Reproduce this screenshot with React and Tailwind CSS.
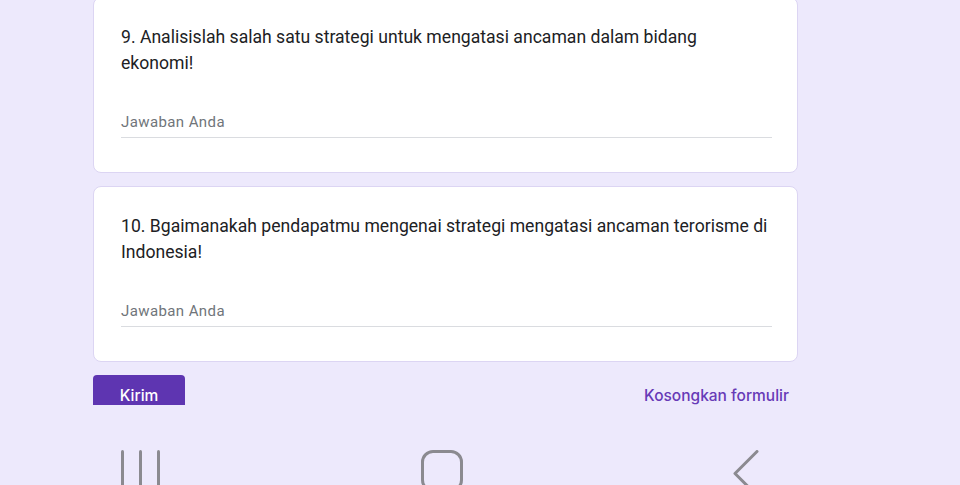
import React from 'react';

const questions = [
  { no: 9, text: 'Analisislah salah satu strategi untuk mengatasi ancaman dalam bidang ekonomi!' },
  { no: 10, text: 'Bgaimanakah pendapatmu mengenai strategi mengatasi ancaman terorisme di Indonesia!' },
];

const QuestionCard = ({ q }) => (
  <div className="w-[705px] bg-white border border-[#dcd5f3] rounded-lg pl-[27px] pr-[25px] pt-[26px] pb-[34px]">
    <div className="w-[650px] text-[17.6px] leading-[26px] text-[#202124]" style={{ fontFamily: 'Roboto, sans-serif' }}>
      {q.no}. {q.text}
    </div>
    <div className="mt-[36px] pb-[5px] border-b border-[#dadce0]">
      <div className="text-[15px] leading-[20px] tracking-[0.4px] text-[#70757a]" style={{ fontFamily: 'Roboto, sans-serif' }}>
        Jawaban Anda
      </div>
    </div>
  </div>
);

const NavBar = () => (
  <div className="h-[80px] overflow-hidden bg-[#ede9fc] flex items-start pt-[45px]">
    <div className="ml-[121px] flex gap-[15px]">
      <div className="w-[3px] h-[60px] rounded-full bg-[#8b8a90]" />
      <div className="w-[3px] h-[60px] rounded-full bg-[#8b8a90]" />
      <div className="w-[3px] h-[60px] rounded-full bg-[#8b8a90]" />
    </div>
    <div className="ml-[261px] w-[42px] h-[42px] rounded-[12px] border-[3px] border-[#8b8a90]" />
    <svg className="ml-[269px]" width="30" height="50" viewBox="0 0 30 50">
      <path d="M25 1.5 L3 23.5 L25 45.5" fill="none" stroke="#8b8a90" strokeWidth="3" strokeLinecap="round" strokeLinejoin="round" />
    </svg>
  </div>
);

export default function App() {
  return (
    <div className="w-[960px] h-[485px] bg-[#ede9fc] overflow-hidden">
      <div className="h-[405px] overflow-hidden">
        <div className="-mt-[3px] pl-[93px] flex flex-col gap-[13px]">
          {questions.map(q => <QuestionCard key={q.no} q={q} />)}
          <div className="w-[705px] flex justify-between items-start">
            <button className="w-[92px] h-[36px] rounded-[4px] bg-[#5e35b1] text-white text-[15.5px] font-medium pt-[5px]" style={{ fontFamily: 'Inter, sans-serif' }}>
              Kirim
            </button>
            <button className="h-[36px] px-[9px] text-[#673ab7] text-[15.5px] font-medium pt-[5px]" style={{ fontFamily: 'Inter, sans-serif' }}>
              Kosongkan formulir
            </button>
          </div>
        </div>
      </div>
      <NavBar />
    </div>
  );
}
